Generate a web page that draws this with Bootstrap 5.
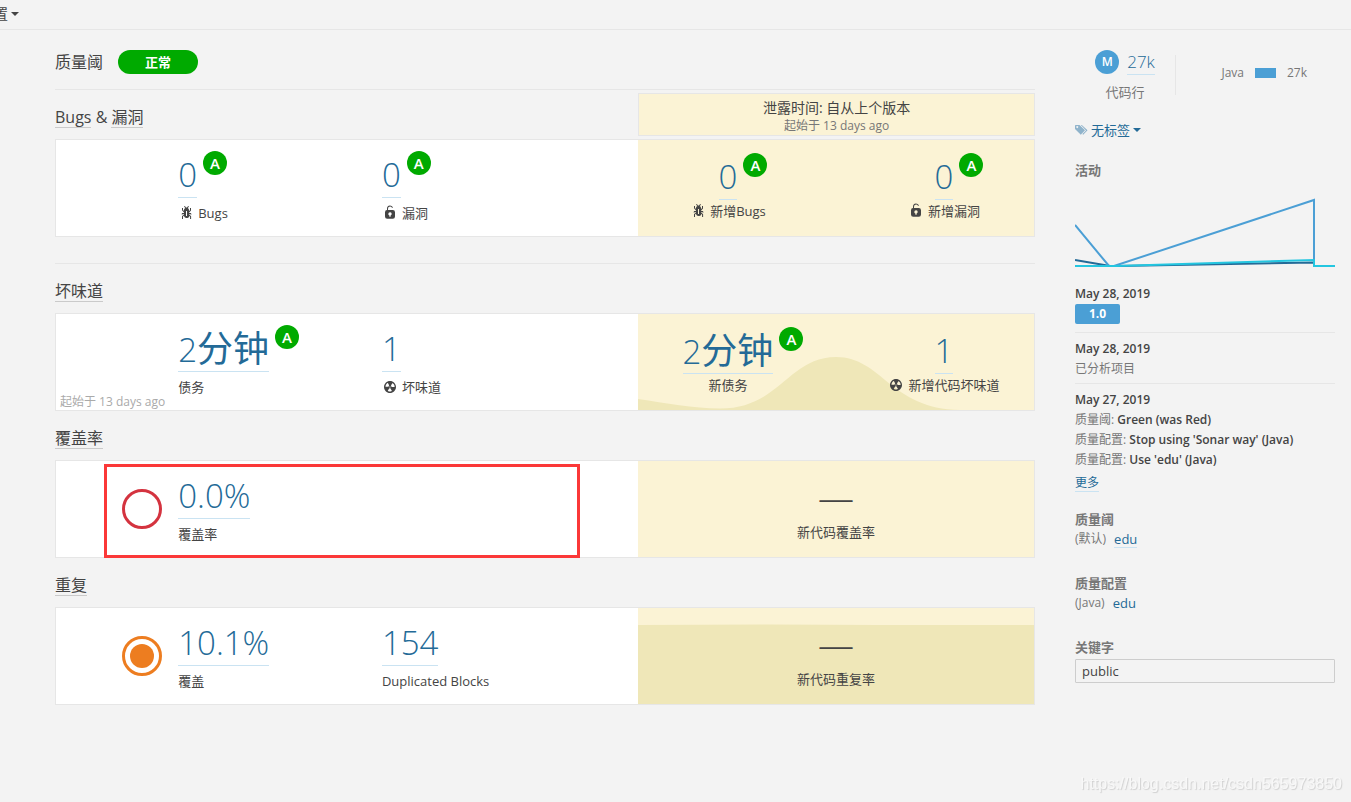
<!DOCTYPE html>
<html lang="zh-CN">
<head>
<meta charset="utf-8">
<meta name="viewport" content="width=device-width, initial-scale=1">
<title>项目概览</title>
<link rel="stylesheet" href="https://cdn.jsdelivr.net/npm/bootstrap@5.3.0/dist/css/bootstrap.min.css">
<style>
body{background:#f3f3f3;color:#444;font:13px/20px "Open Sans","Noto Sans CJK SC",sans-serif}
a{color:#236a97;text-decoration:none}
.topbar{height:30px;padding-bottom:2px;border-bottom:1px solid #e6e6e6}
.topbar a{color:#444;font-size:14px;margin-left:-6px;gap:3px}
.caret-down{width:0;height:0;border:4px solid transparent;border-top-color:currentColor;border-bottom:0}
.page-wrap{padding:0 16px 0 55px;gap:40px}
.gate{height:59px;padding-top:5px;gap:15px}
.fs-title{font-size:16px;line-height:20px;font-weight:400}
.pill{width:80px;height:24px;background:#0a0;color:#fff;font-weight:700}
.domain{border-top:1px solid #e6e6e6}
.domain + .domain{margin-top:26px}
.domain-head{height:49px}
.domain-title{padding-bottom:11px}
.domain-title a{display:inline-block;color:#444;border-bottom:1px solid #cacaca}
.leak-head{width:40.5%;height:43px;margin-top:3px;padding-top:4px;background:#fbf3d5;border:1px solid #e6e6e6;font-size:14px}
.leak-head small{display:block;font-size:12px;line-height:16px;color:#777}
.panel{height:98px;border:1px solid #e6e6e6;background:#fff}
.nutd{display:grid;grid-template-columns:21% 35% 1fr}
.leak{width:40.5%;background:#fbf3d5;gap:36px;text-align:center;overflow:hidden}
.leak-chart{position:absolute;inset:0;width:100%;height:100%;fill:#efe7b8}
.leak .measure{flex:1 1 0;padding-top:15px;white-space:nowrap}
.measure{position:relative;padding-top:13px}
.num{position:relative;display:inline-block;height:45px;font-size:33px;line-height:44px;font-weight:300;vertical-align:top}
a.num{border-bottom:1px solid #cae3f2}
.num.none{font-size:36px}
.cjk{font-size:36px;font-weight:400}
.rating{display:flex;align-items:center;justify-content:center;width:24px;height:24px;border-radius:50%;background:#0a0;color:#fff;font-size:15px;line-height:24px;font-weight:600}
.rating.size{background:#4b9fd5;font-size:12px}
.num .rating{position:absolute;left:100%;top:-2px;margin-left:6px}
.cap{display:flex;align-items:center;gap:4px;margin-top:5px;height:20px}
.leak .cap{justify-content:center;margin-top:1px}
.cap svg{width:16px;height:16px;fill:#444;flex:none}
.since{position:absolute;left:4px;bottom:0;font-size:12px;line-height:16px;color:#aaa}
.mark-box{position:absolute;left:48px;right:58px;top:3px;bottom:-1px;border:3px solid #fb3838}
.side{width:260px;flex:none;font-size:12px;padding-top:20px}
.size-box{width:100px;height:50px}
.size-name{font-size:13px;padding-top:7px}
.lang-box{height:40px;margin-top:5px;border-left:1px solid #e6e6e6;gap:11px;padding:0 28px 4px 0;color:#777}
.loc{font-size:17px;line-height:24px;font-weight:300;border-bottom:1px solid #cae3f2}
.bar{width:21px;height:10px;background:#4b9fd5}
.tags{margin:20px 0;gap:3px;font-size:13px}
.muted{color:#777}
.side h2{font-size:13px;line-height:20px;font-weight:600;color:#777;margin:0}
.act{margin:11px 0 13px}
.event{border-top:1px solid #e6e6e6;padding:6px 0 4px}
.event b,.dt{font-weight:600}
.more{margin:5px 0 13px}
.ver{display:block;width:45px;height:20px;background:#4b9fd5;color:#fff;border-radius:2px;font-weight:700;text-align:center}
.ul{display:inline-block;line-height:16px;border-bottom:1px solid #cae3f2}
.pair{display:flex;align-items:center;gap:8px;height:20px}
.pair a{font-size:13px}
.key{width:100%;height:24px;margin-top:2px;padding:0 6px;border:1px solid #cdcdcd;border-radius:1px;background:transparent;color:#444;display:block;font-size:13px}
.wm{position:fixed;right:9px;bottom:8px;font:16px/20px "Liberation Sans",sans-serif;color:#f8f8f8;text-shadow:1px 1px 1px #d0d0d0}
</style>
<script src="https://cdn.jsdelivr.net/npm/bootstrap@5.3.0/dist/js/bootstrap.bundle.min.js"></script>
</head>
<body>
<svg class="d-none">
<symbol id="bug" viewBox="0 0 16 16"><path d="M11 9h1.3l.5.8.8-.5-.8-1.3H11v-.3l2-2.3V3h-1v2l-1 1.2V5c-.1-.8-.7-1.5-1.4-1.9L11 1.8l-.7-.7-1.8 1.6-1.8-1.6-.7.7 1.5 1.3C6.7 3.5 6.1 4.2 6 5v1.1L5 5V3H4v2.3l2 2.3V8H4.2l-.7 1.2.8.5.4-.7H6v.3l-2 1.9V14h1v-2.4l1-1C6 12 7.1 13 8.4 13h.8c.7 0 1.4-.3 1.8-.9.3-.4.3-.9.2-1.4l.9.9V14h1v-2.8l-2-1.9V9zm-2 2H8V6h1v5z"/></symbol>
<symbol id="lock" viewBox="0 0 16 16"><path d="M10.8 5H6V3.9a2.28 2.28 0 0 1 2-2.5 2.22 2.22 0 0 1 1.8 1.2.48.48 0 0 0 .7.2.48.48 0 0 0 .2-.7A3 3 0 0 0 8 .4a3.34 3.34 0 0 0-3 3.5v1.2a2.16 2.16 0 0 0-2 2.1v4.4a2.22 2.22 0 0 0 2.2 2.2h5.6a2.22 2.22 0 0 0 2.2-2.2V7.2A2.22 2.22 0 0 0 10.8 5zm-2.2 5.5v1.2H7.4v-1.2a1.66 1.66 0 0 1-1.1-1.6A1.75 1.75 0 0 1 8 7.2a1.71 1.71 0 0 1 .6 3.3z"/></symbol>
<symbol id="smell" viewBox="0 0 16 16"><path d="M8 2C4.7 2 2 4.7 2 8s2.7 6 6 6 6-2.7 6-6-2.7-6-6-6zm-.5 5.5h.9v.9h-.9v-.9zm-3.8.2c-.1 0-.2-.1-.2-.2 0-.4.1-1.2.6-2S5.3 4.2 5.6 4c.2 0 .3 0 .3.1l1.3 2.3c0 .1 0 .2-.1.2-.1.2-.2.3-.3.5-.1.2-.2.4-.2.5 0 .1-.1.2-.2.2l-2.7-.1zM9.9 12c-.3.2-1.1.5-2 .5-.9 0-1.7-.3-2-.5-.1 0-.1-.2-.1-.3l1.3-2.3c0-.1.1-.1.2-.1.2.1.3.1.5.1s.4 0 .5-.1c.1 0 .2 0 .2.1l1.3 2.3c.2.2.2.3.1.3zm2.5-4.1L9.7 8c-.1 0-.2-.1-.2-.2 0-.2-.1-.4-.2-.5 0-.1-.1-.3-.2-.5-.1 0-.1-.1-.1-.2l1.3-2.3c0-.1.2-.2.3-.1.3.2.9.6 1.4 1.4.5.8.6 1.6.7 2 0 .2-.1.3-.6.3z"/></symbol>
</svg>

<nav class="topbar d-flex align-items-center overflow-hidden">
  <a href="#" class="d-flex align-items-center">置 <span class="caret-down"></span></a>
</nav>

<div class="page-wrap d-flex align-items-start">
<main class="flex-grow-1">
  <div class="gate d-flex align-items-center">
    <h1 class="fs-title m-0">质量阈</h1>
    <span class="pill rounded-pill d-flex align-items-center justify-content-center">正常</span>
  </div>

  <section class="domain">
    <div class="domain-head d-flex justify-content-between">
      <h2 class="domain-title fs-title m-0 align-self-end"><a href="#">Bugs</a> &amp; <a href="#">漏洞</a></h2>
      <div class="leak-head text-center">泄露时间: 自从上个版本<small>起始于 13 days ago</small></div>
    </div>
    <div class="panel d-flex">
      <div class="nutd flex-grow-1">
        <div></div>
        <div class="measure"><a href="#" class="num">0<span class="rating">A</span></a><div class="cap"><svg><use href="#bug"/></svg>Bugs</div></div>
        <div class="measure"><a href="#" class="num">0<span class="rating">A</span></a><div class="cap"><svg><use href="#lock"/></svg>漏洞</div></div>
      </div>
      <div class="leak d-flex">
        <div class="measure"><a href="#" class="num">0<span class="rating">A</span></a><div class="cap"><svg><use href="#bug"/></svg>新增Bugs</div></div>
        <div class="measure"><a href="#" class="num">0<span class="rating">A</span></a><div class="cap"><svg><use href="#lock"/></svg>新增漏洞</div></div>
      </div>
    </div>
  </section>

  <section class="domain">
    <div class="domain-head d-flex">
      <h2 class="domain-title fs-title m-0 align-self-end"><a href="#">坏味道</a></h2>
    </div>
    <div class="panel d-flex">
      <div class="nutd flex-grow-1 position-relative">
        <div><span class="since">起始于 13 days ago</span></div>
        <div class="measure"><a href="#" class="num">2<span class="cjk">分钟</span><span class="rating">A</span></a><div class="cap">债务</div></div>
        <div class="measure"><a href="#" class="num">1</a><div class="cap"><svg><use href="#smell"/></svg>坏味道</div></div>
      </div>
      <div class="leak d-flex position-relative">
        <svg class="leak-chart" viewBox="0 0 396 96" preserveAspectRatio="none"><path d="M0 85C28 89 55 94.5 82 94.5C142 94.5 150 43 198 43C244 43 252 95 322 96H0z"/></svg>
        <div class="measure"><a href="#" class="num">2<span class="cjk">分钟</span><span class="rating">A</span></a><div class="cap">新债务</div></div>
        <div class="measure"><a href="#" class="num">1</a><div class="cap"><svg><use href="#smell"/></svg>新增代码坏味道</div></div>
      </div>
    </div>
  </section>

  <section>
    <div class="domain-head d-flex">
      <h2 class="domain-title fs-title m-0 align-self-end"><a href="#">覆盖率</a></h2>
    </div>
    <div class="panel d-flex">
      <div class="nutd flex-grow-1 position-relative">
        <div class="d-flex align-items-center justify-content-end pe-3"><svg width="40" height="40"><circle cx="20" cy="20" r="18.5" fill="none" stroke="#d4333f" stroke-width="3"/></svg></div>
        <div class="measure"><a href="#" class="num">0.0%</a><div class="cap">覆盖率</div></div>
        <div class="mark-box"></div>
      </div>
      <div class="leak d-flex">
        <div class="measure"><span class="num none">—</span><div class="cap">新代码覆盖率</div></div>
      </div>
    </div>
  </section>

  <section>
    <div class="domain-head d-flex">
      <h2 class="domain-title fs-title m-0 align-self-end"><a href="#">重复</a></h2>
    </div>
    <div class="panel d-flex">
      <div class="nutd flex-grow-1">
        <div class="d-flex align-items-center justify-content-end pe-3"><svg width="40" height="40"><circle cx="20" cy="20" r="18.5" fill="none" stroke="#ed7d20" stroke-width="3"/><circle cx="20" cy="20" r="12" fill="#ed7d20"/></svg></div>
        <div class="measure"><a href="#" class="num">10.1%</a><div class="cap">覆盖</div></div>
        <div class="measure"><a href="#" class="num">154</a><div class="cap">Duplicated Blocks</div></div>
      </div>
      <div class="leak d-flex position-relative">
        <svg class="leak-chart" viewBox="0 0 396 96" preserveAspectRatio="none"><path d="M0 17Q140 16 240 17H396V96H0z"/></svg>
        <div class="measure"><span class="num none">—</span><div class="cap">新代码重复率</div></div>
      </div>
    </div>
  </section>
</main>

<aside class="side">
  <div class="d-flex">
    <div class="size-box flex-shrink-0">
      <div class="d-flex justify-content-center gap-2"><span class="rating size">M</span><a href="#" class="loc">27k</a></div>
      <div class="size-name muted text-center">代码行</div>
    </div>
    <div class="lang-box flex-grow-1 d-flex align-items-center justify-content-end"><span>Java</span><span class="bar"></span><span>27k</span></div>
  </div>
  <a href="#" class="tags d-flex align-items-center"><svg width="13" height="12" viewBox="0 0 13 12" fill="#8fb3cb"><path fill-rule="evenodd" d="M.8 1H4.500L10 6.300 5.800 10.800 0 5V1.800Q0 1 .8 1zM2.200 2a1 1 0 1 0 .1 0z"/><path d="M5.800 1h1L12.500 6.300 8.200 10.800l-.8-.7L11 6.400z"/></svg><span>无标签</span><span class="caret-down"></span></a>
  <h2>活动</h2>
  <svg class="act d-block w-100" height="80" viewBox="0 0 260 80" preserveAspectRatio="none" fill="none" stroke-width="2"><path stroke="#236a97" d="M0 69L35 75H42L239 71.5V75"/><path stroke="#4b9fd5" d="M0 34L34 75H39L239 9V75"/><path stroke="#24c6e0" d="M0 75H42L239 69V75H260"/></svg>
  <div class="dt">May 28, 2019</div>
  <a href="#" class="ver">1.0</a>
  <div class="event mt-2"><b>May 28, 2019</b><div class="muted">已分析项目</div></div>
  <div class="event"><b>May 27, 2019</b>
    <div><span class="muted">质量阈:</span> <b>Green (was Red)</b></div>
    <div><span class="muted">质量配置:</span> <b>Stop using 'Sonar way' (Java)</b></div>
    <div><span class="muted">质量配置:</span> <b>Use 'edu' (Java)</b></div>
    <a href="#" class="ul more">更多</a>
  </div>
  <h2>质量阈</h2>
  <div class="pair muted"><span>(默认)</span><a href="#" class="ul">edu</a></div>
  <h2 class="mt-4">质量配置</h2>
  <div class="pair muted"><span>(Java)</span><a href="#">edu</a></div>
  <h2 class="mt-4"><label for="key">关键字</label></h2>
  <input id="key" class="key" value="public" readonly>
</aside>
</div>
<div class="wm">https://blog.csdn.net/csdn565973850</div>
</body>
</html>
